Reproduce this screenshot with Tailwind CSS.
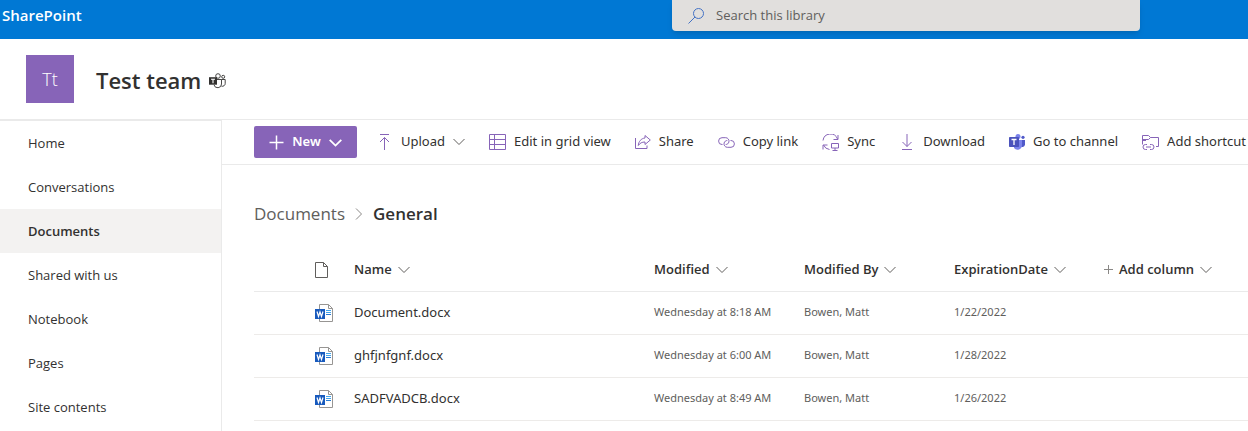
<!DOCTYPE html>
<html lang="en">
<head>
  <meta charset="UTF-8">
  <meta name="viewport" content="width=device-width, initial-scale=1.0" />
  <title>Test team - Documents</title>
  <script src="https://cdn.jsdelivr.net/npm/@tailwindcss/browser@4"></script>
</head>
<body class="bg-white font-['Segoe_UI','Open_Sans',sans-serif] text-[13px] text-[#323130]">
  <!-- Shared symbols -->
  <svg class="hidden">
    <symbol id="chevron" viewBox="0 0 12 12"><path d="M0.5 3 6 8.5 11.5 3" fill="none" stroke="currentColor" /></symbol>
    <symbol id="word" viewBox="0 0 18 18">
      <path d="M4.5 0.5h9l4 4v13h-13z" fill="#fff" stroke="#979593" />
      <path d="M13.5 0.5v4h4" fill="none" stroke="#979593" />
      <path d="M11 6.5h5M11 8.5h5" stroke="#41a5ee" />
      <path d="M11 10.5h5" stroke="#2b7cd3" />
      <path d="M0 5h10v10H0z" fill="#185abd" />
      <path d="M2 7.5 3.5 12.5 5 8 6.5 12.5 8 7.5" fill="none" stroke="#fff" stroke-width="1.2" />
    </symbol>
  </svg>

  <div class="min-h-screen flex flex-col overflow-hidden">
    <header class="h-[39px] shrink-0 bg-[#0078d4] flex items-start">
      <a href="#" class="pl-0.5 leading-[30px] text-[15px] font-semibold text-white">SharePoint</a>
      <label class="ml-auto mr-[108px] w-[468px] h-[31px] pl-4 flex items-center gap-3 rounded-b-sm bg-[#e1dfdd] shadow-md">
        <svg class="size-4 shrink-0" viewBox="0 0 16 16" fill="none" stroke="#4472c4"><circle cx="10.5" cy="5.5" r="5" /><path d="M7 9 0.5 15.5" /></svg>
        <input type="search" aria-label="Search this library" placeholder="Search this library" class="flex-1 min-w-0 bg-transparent outline-none placeholder:text-[#605e5c]" />
      </label>
    </header>

    <div class="h-20 shrink-0 pl-[26px] flex items-center">
      <div class="size-12 bg-[#8764b8] text-white text-lg font-light flex items-center justify-center">Tt</div>
      <h1 class="ml-[22px] pt-0.5 text-[22px] font-semibold">Test team</h1>
      <svg class="ml-2 mt-1 w-[17px] h-4" viewBox="0 0 17 16" fill="none" stroke="#323130" stroke-width="0.9">
        <circle cx="9" cy="3" r="2.3" /><circle cx="14.2" cy="3.8" r="1.5" />
        <path d="M8 6.5h4.5v4.5a3.8 3.8 0 0 1-7.5.8M12.5 6.5h3.7v4a2.8 2.8 0 0 1-3.8 2.6" />
        <path d="M0 4.2h8v7.5H0z" fill="#323130" stroke="none" />
        <path d="M2 6.3h4M4 6.3v4" stroke="#fff" stroke-width="1.1" />
      </svg>
    </div>

    <div class="flex-1 flex border-t border-[#eaeaea]">
      <nav class="w-[222px] shrink-0 border-t border-r border-[#eaeaea] leading-[44px]">
        <a href="#" class="block h-11 pl-7">Home</a>
        <a href="#" class="block h-11 pl-7">Conversations</a>
        <a href="#" aria-current="page" class="block h-11 pl-7 bg-[#f3f2f1] font-semibold">Documents</a>
        <a href="#" class="block h-11 pl-7">Shared with us</a>
        <a href="#" class="block h-11 pl-7">Notebook</a>
        <a href="#" class="block h-11 pl-7">Pages</a>
        <a href="#" class="block h-[35px] pl-7">Site contents</a>
      </nav>

      <main class="flex-1 min-w-0">
        <div class="h-[45px] pl-8 flex items-center gap-6 border-b border-[#eaeaea] overflow-hidden whitespace-nowrap font-['Noto_Sans',sans-serif]">
          <button class="w-[103px] h-8 shrink-0 -mr-1 flex items-center justify-center gap-2 rounded-xs bg-[#8764b8] text-white font-semibold">
            <svg class="size-[15px]" viewBox="0 0 15 15" stroke="currentColor" stroke-width="1.5"><path d="M7.5 0.5v14M0.5 7.5h14" /></svg>
            New
            <svg class="size-[13px]" viewBox="0 0 13 13" fill="none" stroke="currentColor" stroke-width="1.8"><path d="M0.7 3.8 6.5 9.6l5.8-5.8" /></svg>
          </button>
          <button class="flex items-center gap-2">
            <svg class="size-4" viewBox="0 0 16 16" fill="none" stroke="#8764b8"><path d="M3 0.5h9M7.5 16V3.5M3 8l4.5-4.5L12 8" /></svg>
            Upload
            <svg class="size-3 text-[#605e5c]"><use href="#chevron" /></svg>
          </button>
          <button class="flex items-center gap-2">
            <svg class="size-[17px]" viewBox="0 0 17 17" fill="none" stroke="#8764b8"><path d="M0.5 0.5h16v15H0.5zM5.5 0.5v15M0.5 5.5h16M0.5 10.5h16" /></svg>
            Edit in grid view
          </button>
          <button class="flex items-center gap-2">
            <svg class="size-4" viewBox="0 0 16 16" fill="none" stroke="#8764b8"><path d="M0.5 4v10.5h11.5V11.500M10 1.500l5.300 4.500L10 10.500V8C7 8 5 9 3.300 11.500 3.600 7.500 6 4.500 10 4z" /></svg>
            Share
          </button>
          <button class="flex items-center gap-2">
            <svg class="size-[17px]" viewBox="0 0 17 17" fill="none" stroke="#8764b8"><path d="M4.5 10.500H4a3.300 3.300 0 0 1 0-6.800h3.700a3.400 3.400 0 0 1 3.200 4.300c-.4 1.500-1.600 2.500-3.200 2.500" /><path d="M12.500 6.500h.5a3.300 3.300 0 0 1 0 6.800H9.300A3.400 3.400 0 0 1 6.100 9c.4-1.500 1.600-2.500 3.200-2.500" /></svg>
            Copy link
          </button>
          <button class="flex items-center gap-2">
            <svg class="size-[17px]" viewBox="0 0 17 17" fill="none" stroke="#8764b8"><path d="M1 6.500A7.500 7.500 0 0 1 15.500 5M16 1v4.500h-4.500M7.500 15.500A7.500 7.500 0 0 1 1.500 11M1 15.500v-4.500h4.500M9.500 9.500h7v4.500h-7zM13 14v2M10.500 16.500h5" /></svg>
            Sync
          </button>
          <button class="flex items-center gap-2">
            <svg class="size-4" viewBox="0 0 16 16" fill="none" stroke="#8764b8"><path d="M3 15.500h10M8 0v12.500M3.500 8l4.500 4.500L12.500 8" /></svg>
            Download
          </button>
          <button class="flex items-center gap-2">
            <svg class="size-4" viewBox="0 0 16 16">
              <circle cx="9" cy="2.500" r="2.500" fill="#7b83eb" /><circle cx="14" cy="3.300" r="1.600" fill="#5059c9" />
              <path d="M11 6h5v4.500a2.800 2.800 0 0 1-5 1.500z" fill="#5059c9" />
              <path d="M5 6h8v5a4.500 4.500 0 0 1-8 3z" fill="#7b83eb" />
              <rect y="3" width="10" height="10" rx="0.700" fill="#4b53bc" />
              <path d="M2.500 5.500h5M5 5.500v5.500" stroke="#fff" stroke-width="1.300" />
            </svg>
            Go to channel
          </button>
          <button class="flex items-center gap-2">
            <svg class="size-[17px]" viewBox="0 0 17 17" fill="none" stroke="#8764b8"><path d="M4 6.500H0.500v-5h6l2 2h8v9h-2.500M0.500 5.500h6l2-2" /><path d="M0.500 5.500v5M5 15.500H3.500a2.500 2.500 0 0 1 0-5H5M8 10.500h1.500a2.500 2.500 0 0 1 0 5H8M4 13h5" /></svg>
            Add shortcut
          </button>
        </div>

        <div class="pl-8 pt-[35px]">
          <ol class="h-7 flex items-center gap-2 text-[17px]">
            <li><a href="#" class="text-[#605e5c]">Documents</a></li>
            <li><svg class="size-3 -rotate-90 text-[#8a8886]"><use href="#chevron" /></svg></li>
            <li class="font-semibold" aria-current="page">General</li>
          </ol>

          <table class="mt-[21px] w-full table-fixed text-left">
            <thead>
              <tr class="h-[42px] border-b border-[#eaeaea]">
                <th class="w-[100px] pl-[61px]"><svg class="w-[13px] h-4" viewBox="0 0 13 16" fill="none" stroke="#605e5c" role="img" aria-label="File type"><path d="M0.500 0.500h8l4 4v11H0.500zM8.500 0.500v4h4" /></svg></th>
                <th class="w-[300px] font-semibold"><button class="flex items-center gap-1.5">Name <svg class="size-3 text-[#605e5c]"><use href="#chevron" /></svg></button></th>
                <th class="w-[150px] font-semibold"><button class="flex items-center gap-1.5">Modified <svg class="size-3 text-[#605e5c]"><use href="#chevron" /></svg></button></th>
                <th class="w-[150px] font-semibold"><button class="flex items-center gap-1.5">Modified By <svg class="size-3 text-[#605e5c]"><use href="#chevron" /></svg></button></th>
                <th class="w-[150px] font-semibold"><button class="flex items-center gap-1.5">ExpirationDate <svg class="size-3 text-[#605e5c]"><use href="#chevron" /></svg></button></th>
                <th class="font-semibold"><button class="flex items-center gap-1.5 whitespace-nowrap"><svg class="size-[9px]" viewBox="0 0 9 9" stroke="#8a8886"><path d="M4.500 0v9M0 4.500h9" /></svg> Add column <svg class="size-3 text-[#605e5c]"><use href="#chevron" /></svg></button></th>
              </tr>
            </thead>
            <tbody class="font-['Noto_Sans',sans-serif] text-[11px] text-[#605e5c]">
              <tr class="h-[43px] border-b border-[#edebe9]">
                <td class="pl-[61px]"><svg class="size-[18px]"><use href="#word" /></svg></td>
                <td class="text-[13px] text-[#323130]"><a href="#">Document.docx</a></td>
                <td>Wednesday at 8:18 AM</td>
                <td>Bowen, Matt</td>
                <td>1/22/2022</td>
                <td></td>
              </tr>
              <tr class="h-[43px] border-b border-[#edebe9]">
                <td class="pl-[61px]"><svg class="size-[18px]"><use href="#word" /></svg></td>
                <td class="text-[13px] text-[#323130]"><a href="#">ghfjnfgnf.docx</a></td>
                <td>Wednesday at 6:00 AM</td>
                <td>Bowen, Matt</td>
                <td>1/28/2022</td>
                <td></td>
              </tr>
              <tr class="h-[43px] border-b border-[#edebe9]">
                <td class="pl-[61px]"><svg class="size-[18px]"><use href="#word" /></svg></td>
                <td class="text-[13px] text-[#323130]"><a href="#">SADFVADCB.docx</a></td>
                <td>Wednesday at 8:49 AM</td>
                <td>Bowen, Matt</td>
                <td>1/26/2022</td>
                <td></td>
              </tr>
            </tbody>
          </table>
        </div>
      </main>
    </div>
  </div>
</body>
</html>
